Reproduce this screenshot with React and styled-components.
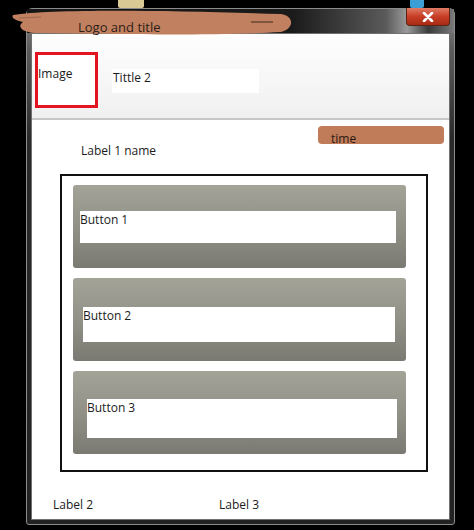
import styled, { createGlobalStyle } from "styled-components";

const GlobalStyle = createGlobalStyle`
    html, body {
        margin: 0;
        padding: 0;
        background: #000;
    }
    body {
        font-family: "Open Sans", "Noto Sans", sans-serif;
        font-size: 12px;
        color: #1b1b1b;
    }
    #root {
        width: 474px;
        height: 530px;
        overflow: hidden;
    }
`;

function App() {
    return (
        <>
            <GlobalStyle />
            <Desktop>
                <DesktopIcon left={118} width={26} color="#d9c995" />
                <DesktopIcon left={266} width={14} color="#3b9fd6" />
            </Desktop>
            <Window>
                <Scribble>
                    <svg width="282" height="30" viewBox="0 0 282 30">
                        <path
                            d="M2 9 C 40 3, 150 4, 270 8 C 283 10, 284 22, 270 26 C 200 30, 90 28, 24 27 C 10 26, 6 20, 12 16 C 4 14, 0 12, 2 9 Z"
                            fill="#c1805f"
                        />
                        <path d="M8 12 L 30 11" stroke="#9a6a50" strokeWidth="1" />
                        <path d="M240 16 L 262 16" stroke="#3a2a20" strokeWidth="1" />
                    </svg>
                    <ScribbleText>Logo and title</ScribbleText>
                </Scribble>
                <TitleBar>
                    <CloseBtn>
                        <svg width="12" height="10" viewBox="0 0 12 10">
                            <path d="M2 1 L10 9 M10 1 L2 9" stroke="#fff" strokeWidth="2.6" strokeLinecap="round" />
                        </svg>
                    </CloseBtn>
                </TitleBar>
                <Client>
                    <Header>
                        <ImageBox>Image</ImageBox>
                        <TitleBox>Tittle 2</TitleBox>
                    </Header>
                    <TopRow>
                        <Label1>Label 1 name</Label1>
                        <TimeBox>time</TimeBox>
                    </TopRow>
                    <Frame>
                        <MenuButton>
                            <ButtonField left={7} top={26} width={316} height={32}>
                                Button 1
                            </ButtonField>
                        </MenuButton>
                        <MenuButton>
                            <ButtonField left={10} top={29} width={312} height={35}>
                                Button 2
                            </ButtonField>
                        </MenuButton>
                        <MenuButton>
                            <ButtonField left={14} top={28} width={310} height={39}>
                                Button 3
                            </ButtonField>
                        </MenuButton>
                    </Frame>
                    <Footer>
                        <span>Label 2</span>
                        <span>Label 3</span>
                    </Footer>
                </Client>
            </Window>
        </>
    );
}

export default App;

const Desktop = styled.div`
    position: relative;
    height: 8px;
    display: flex;
    align-items: flex-start;
    gap: 0;
`;

const DesktopIcon = styled.div`
    margin-left: ${(p) => p.left}px;
    width: ${(p) => p.width}px;
    height: 8px;
    background: ${(p) => p.color};
    border-radius: 0 0 2px 2px;
`;

const Window = styled.div`
    position: relative;
    margin-left: 26px;
    width: 429px;
    height: 517px;
    box-sizing: border-box;
    border: 1px solid #8c8c8c;
    border-radius: 6px 6px 3px 3px;
    padding: 0 4px 4px 4px;
    display: flex;
    flex-direction: column;
    background: linear-gradient(
        180deg,
        #8a8a8a 0px,
        #5c5c5c 40px,
        #2a2a2a 130px,
        #222 100%
    );
`;

const Scribble = styled.div`
    position: absolute;
    left: -16px;
    top: -3px;
    width: 282px;
    height: 30px;
    z-index: 2;

    svg {
        position: absolute;
        left: 0;
        top: 0;
    }
`;

const ScribbleText = styled.div`
    position: relative;
    padding: 13px 0 0 67px;
    font-size: 13px;
    line-height: 17px;
    color: #2e2018;
`;

const TitleBar = styled.div`
    height: 24px;
    display: flex;
    justify-content: flex-end;
    align-items: flex-start;
    margin: 0 -4px;
    padding-right: 4px;
    background: linear-gradient(
        90deg,
        #151515 0%,
        #1a1a1a 62%,
        #5a5a5a 84%,
        #9a9a9a 89%,
        #3a3a3a 94%,
        #7a7a7a 100%
    );
`;

const CloseBtn = styled.div`
    margin-top: -1px;
    width: 44px;
    height: 18px;
    box-sizing: border-box;
    border: 1px solid #5c2418;
    border-top: none;
    border-radius: 0 0 4px 4px;
    background: linear-gradient(180deg, #e07a64 0%, #c83e26 50%, #a82a14 100%);
    display: flex;
    align-items: center;
    justify-content: center;
`;

const Client = styled.div`
    flex: 1;
    background: #fff;
    border: 1px solid #707070;
    display: flex;
    flex-direction: column;
`;

const Header = styled.div`
    height: 86px;
    box-sizing: border-box;
    border-bottom: 2px solid #c6c6c6;
    background: linear-gradient(180deg, #fefefe 0%, #f0f0f0 100%);
    display: flex;
    align-items: flex-start;
    gap: 14px;
    padding: 18px 0 0 3px;
`;

const ImageBox = styled.div`
    width: 63px;
    height: 56px;
    box-sizing: border-box;
    border: 3px solid #e3141f;
    background: #fff;
    padding-top: 10px;
    font-size: 12px;
    line-height: 17px;
`;

const TitleBox = styled.div`
    margin-top: 17px;
    width: 146px;
    height: 24px;
    background: #fff;
    padding-left: 1px;
    font-size: 12px;
    line-height: 17px;
`;

const TopRow = styled.div`
    display: flex;
    justify-content: space-between;
    align-items: flex-start;
    padding-left: 49px;
`;

const Label1 = styled.div`
    margin-top: 22px;
    font-size: 12px;
    line-height: 17px;
`;

const TimeBox = styled.div`
    margin: 6px 5px 0 0;
    width: 126px;
    height: 18px;
    box-sizing: border-box;
    border-radius: 4px;
    background: #c07b59;
    padding: 6px 0 0 13px;
    font-size: 12px;
    line-height: 14px;
    color: #2b1a12;
`;

const Frame = styled.div`
    margin: 15px 0 0 28px;
    width: 368px;
    height: 298px;
    box-sizing: border-box;
    border: 2px solid #111;
    display: flex;
    flex-direction: column;
    gap: 10px;
    padding: 9px 0 0 11px;
`;

const MenuButton = styled.div`
    position: relative;
    width: 333px;
    height: 83px;
    border-radius: 3px;
    background: linear-gradient(180deg, #a3a398 0%, #8f8f86 55%, #7a7a72 100%);
`;

const ButtonField = styled.div`
    margin-left: ${(p) => p.left}px;
    margin-top: ${(p) => p.top}px;
    width: ${(p) => p.width}px;
    height: ${(p) => p.height}px;
    position: absolute;
    left: 0;
    top: 0;
    background: #fff;
    font-size: 12px;
    line-height: 17px;
`;

const Footer = styled.div`
    display: grid;
    grid-template-columns: 166px auto;
    padding-left: 21px;
    margin-top: 24px;
    font-size: 12px;
    line-height: 17px;
`;
